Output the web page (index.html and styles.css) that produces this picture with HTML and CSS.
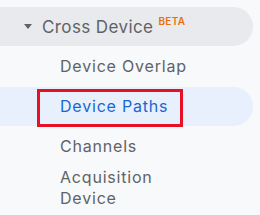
FILE: index.html
```html
<!DOCTYPE html>
<html lang="en">
<head>
  <meta charset="UTF-8" />
  <title>Cross Device</title>
  <link rel="stylesheet" href="styles.css">
</head>
<body>
  <div class="nav">
    <div class="group">
      <span class="caret"></span>
      <span class="group-name">Cross Device</span>
      <span class="beta">BETA</span>
    </div>
    <div class="item">Device Overlap</div>
    <div class="item active">
      <span class="highlight">Device Paths</span>
    </div>
    <div class="item">Channels</div>
    <div class="item">Acquisition<br>Device</div>
  </div>
</body>
</html>
```

FILE: styles.css
```css
* {
  box-sizing: border-box;
}

body {
  margin: 0;
  background: #f8f9fa;
  font-family: Inter, "Liberation Sans", sans-serif;
  color: #5f6368;
}

.nav {
  padding-top: 7px;
}

.group {
  width: 253px;
  height: 39px;
  background: #e8eaed;
  border-radius: 0 20px 20px 0;
  display: flex;
  align-items: center;
  padding-left: 24px;
}

.caret {
  width: 0;
  height: 0;
  border-left: 4px solid transparent;
  border-right: 4px solid transparent;
  border-top: 5px solid #5f6368;
  margin-right: 10px;
}

.group-name {
  font-size: 17px;
  letter-spacing: 0.4px;
}

.beta {
  align-self: flex-start;
  margin-top: 8px;
  margin-left: 5px;
  font-size: 10px;
  font-weight: 600;
  color: #e8710a;
  letter-spacing: 0.3px;
}

.item {
  font-size: 16px;
  line-height: 21px;
  letter-spacing: 0.8px;
  padding: 10px 0 0 60px;
}

.item.active {
  width: 253px;
  height: 39px;
  margin-top: 10px;
  padding: 2px 0 0 37px;
  background: #e8f0fe;
  border-radius: 0 20px 20px 0;
  color: #1967d2;
}

.highlight {
  display: inline-block;
  width: 146px;
  border: 3px solid #e81123;
  padding: 4px 0 7px 20px;
}
```
